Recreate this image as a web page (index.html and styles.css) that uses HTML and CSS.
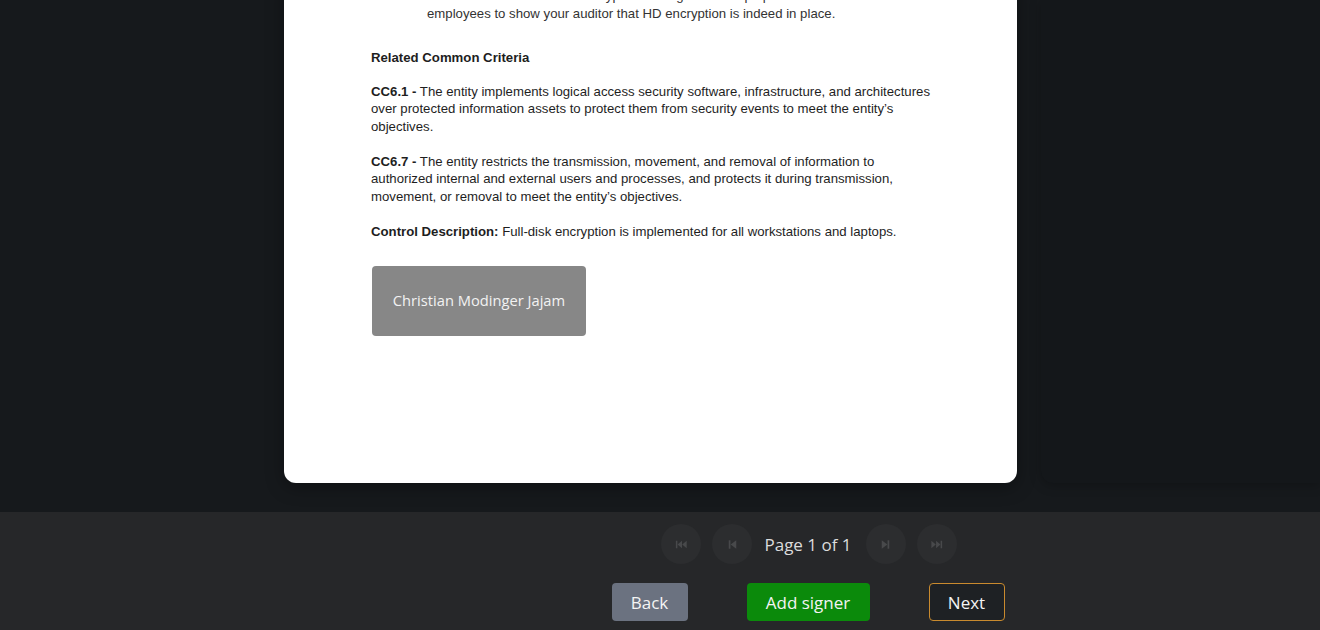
FILE: index.html
```html
<!DOCTYPE html>
<html lang="en">
<head>
<meta charset="UTF-8">
<meta name="viewport" content="width=device-width, initial-scale=1.0">
<title>Sign document</title>
<link rel="stylesheet" href="styles.css">
</head>
<body>

<div class="workspace">
    <!-- Document page -->
    <div class="doc-page">
        <div class="doc-content">
            <p class="indent">Retain screenshots of the encryption settings on the laptops of all relevant</p>
            <p class="indent">employees to show your auditor that HD encryption is indeed in place.</p>

            <p class="heading"><b>Related Common Criteria</b></p>

            <p><b>CC6.1 -</b> The entity implements logical access security software, infrastructure, and architectures<br>
            over protected information assets to protect them from security events to meet the entity’s<br>
            objectives.</p>

            <p><b>CC6.7 -</b> The entity restricts the transmission, movement, and removal of information to<br>
            authorized internal and external users and processes, and protects it during transmission,<br>
            movement, or removal to meet the entity’s objectives.</p>

            <p><b>Control Description:</b> Full-disk encryption is implemented for all workstations and laptops.</p>

            <div class="signature">Christian Modinger Jajam</div>
        </div>
    </div>

    <!-- Side panel -->
    <div class="side-panel"></div>
</div>

<div class="footer">
    <div class="pager">
        <button class="page-btn" disabled>
            <svg viewBox="0 0 16 16" width="15" height="15"><rect x="2" y="4" width="1.6" height="8"/><path d="M8.5 4v8L3.8 8z"/><path d="M13.5 4v8L8.8 8z"/></svg>
        </button>
        <button class="page-btn" disabled>
            <svg viewBox="0 0 16 16" width="15" height="15"><rect x="4" y="3.5" width="1.8" height="9"/><path d="M12 3.5v9L6 8z"/></svg>
        </button>
        <span class="page-label">Page 1 of 1</span>
        <button class="page-btn" disabled>
            <svg viewBox="0 0 16 16" width="15" height="15"><rect x="10.2" y="3.5" width="1.8" height="9"/><path d="M4 3.5v9L10 8z"/></svg>
        </button>
        <button class="page-btn" disabled>
            <svg viewBox="0 0 16 16" width="15" height="15"><path d="M2.5 4v8L7.2 8z"/><path d="M7.5 4v8L12.2 8z"/><rect x="12.4" y="4" width="1.6" height="8"/></svg>
        </button>
    </div>

    <div class="actions">
        <button class="btn btn-back">Back</button>
        <button class="btn btn-add">Add signer</button>
        <button class="btn btn-next">Next</button>
    </div>
</div>

</body>
</html>
```

FILE: styles.css
```css
html, body {
    height: 100%;
    margin: 0;
}

body {
    display: flex;
    flex-direction: column;
    background-color: #16191c;
    font-family: 'Open Sans', sans-serif;
    overflow: hidden;
}

.workspace {
    height: 512px;
    display: flex;
    gap: 24px;
    padding-left: 284px;
    box-sizing: border-box;
}

/* White document page, its top is scrolled out of view */
.doc-page {
    width: 733px;
    height: 503px;
    margin-top: -20px;
    background-color: #ffffff;
    border-radius: 12px;
    box-shadow: 0 4px 18px rgba(0, 0, 0, 0.35);
    overflow: hidden;
}

.doc-content {
    margin-top: 7px;
    padding-left: 87px;
    padding-right: 40px;
    font-family: 'Liberation Sans', Arial, sans-serif;
    font-size: 13.2px;
    line-height: 17.5px;
    color: #1e1e1e;
    white-space: nowrap;
}

.doc-content p {
    margin: 0 0 17.5px 0;
}

.doc-content p.indent {
    margin: 0 0 0 56px;
    color: #333333;
}

.doc-content p.heading {
    margin-top: 27px;
    margin-bottom: 16px;
}

.signature {
    width: 214px;
    height: 70px;
    margin: 26px 0 0 1px;
    background-color: #878787;
    border-radius: 4px;
    color: #f2f2f2;
    font-family: 'Open Sans', sans-serif;
    font-size: 14.7px;
    display: flex;
    align-items: center;
    justify-content: center;
}

.side-panel {
    flex: 1;
    height: 483px;
    background-color: #14171a;
    border-bottom-left-radius: 12px;
    box-shadow: 0 2px 12px rgba(0, 0, 0, 0.25);
}

/* Bottom bar */
.footer {
    flex: 1;
    background-color: #262729;
    padding-left: 298px;
    display: flex;
    flex-direction: column;
    align-items: center;
}

.pager {
    display: flex;
    align-items: center;
    gap: 11px;
    margin-top: 12px;
}

.page-btn {
    width: 40px;
    height: 40px;
    border: none;
    border-radius: 50%;
    background-color: #2c2d2f;
    display: flex;
    align-items: center;
    justify-content: center;
    padding: 0;
}

.page-btn svg {
    fill: #48494b;
}

.page-label {
    color: #dcdcdc;
    font-size: 17px;
    margin: 0 3px 0 1px;
}

.actions {
    display: flex;
    gap: 59px;
    margin-top: 19px;
    margin-left: -2px;
}

.btn {
    height: 38px;
    border-radius: 4px;
    font-family: 'Open Sans', sans-serif;
    font-size: 17px;
    color: #f4f4f4;
    border: none;
    padding: 0 18px;
    cursor: pointer;
}

.btn-back {
    width: 76px;
    background-color: #6b7280;
}

.btn-add {
    width: 123px;
    background-color: #0b8a0b;
}

.btn-next {
    width: 76px;
    background-color: #1e2124;
    border: 1.5px solid #c98a2e;
}
```
